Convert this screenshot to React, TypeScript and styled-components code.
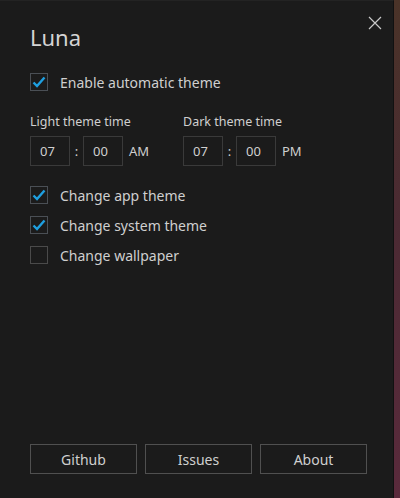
import React, { useState } from 'react';
import styled, { createGlobalStyle } from 'styled-components';

const GlobalStyle = createGlobalStyle`
  html, body {
    margin: 0;
    padding: 0;
    width: 400px;
    height: 498px;
    overflow: hidden;
    background: linear-gradient(180deg, #4a3328 0%, #4b2a33 45%, #5a2a3c 100%);
  }
  * { box-sizing: border-box; }
`;

const Window = styled.div`
  width: 394px;
  height: 498px;
  background: #1b1b1b;
  border-right: 1px solid #111;
  border-top: 1px solid #232323;
  display: flex;
  flex-direction: column;
  padding: 20px 20px 24px 30px;
  font-family: 'Noto Sans', 'Open Sans', sans-serif;
  color: #cfcfcf;
  position: relative;
`;

const CloseButton = styled.button`
  position: absolute;
  top: 12px;
  right: 8px;
  width: 20px;
  height: 20px;
  padding: 0;
  border: none;
  background: transparent;
  display: flex;
  align-items: center;
  justify-content: center;
  cursor: pointer;
`;

const Title = styled.h1`
  margin: 0;
  font-size: 22px;
  font-weight: 400;
  line-height: 32px;
  color: #d4d4d4;
`;

const CheckRow = styled.label`
  display: flex;
  align-items: center;
  gap: 12px;
  height: 30px;
  font-size: 14px;
  color: #cfcfcf;
  cursor: pointer;
`;

const Box = styled.span<{ $checked: boolean }>`
  width: 18px;
  height: 18px;
  border: 1px solid ${(p) => (p.$checked ? '#4a4f55' : '#4a4a4a')};
  background: #1b1b1b;
  display: flex;
  align-items: center;
  justify-content: center;
`;

const TimeSection = styled.div`
  display: flex;
  margin-top: 16px;
  margin-bottom: 14px;
`;

const TimeGroup = styled.div`
  width: 153px;
  display: flex;
  flex-direction: column;
  gap: 5px;
`;

const TimeLabel = styled.div`
  font-size: 12.5px;
  line-height: 18px;
  color: #cfcfcf;
`;

const TimeRow = styled.div`
  display: flex;
  align-items: center;
  font-size: 13px;
`;

const TimeField = styled.div`
  width: 40px;
  height: 30px;
  border: 1px solid #3a3a3a;
  display: flex;
  align-items: center;
  padding-left: 9px;
  font-size: 13px;
  color: #d0d0d0;
`;

const Colon = styled.span`
  width: 13px;
  text-align: center;
`;

const Meridiem = styled.span`
  margin-left: 6px;
`;

const CheckList = styled.div<{ $top?: number }>`
  display: flex;
  flex-direction: column;
  margin-top: ${(p) => p.$top ?? 0}px;
`;

const Spacer = styled.div`
  flex: 1;
`;

const Footer = styled.div`
  display: flex;
  gap: 8px;
`;

const FooterButton = styled.button`
  flex: 0 0 107px;
  height: 30px;
  background: #1b1b1b;
  border: 1px solid #505050;
  color: #cfcfcf;
  font-family: 'Noto Sans', 'Open Sans', sans-serif;
  font-size: 14px;
  padding: 0;
  cursor: pointer;
`;

const Check = () => (
  <svg width="14" height="12" viewBox="0 0 14 12">
    <path d="M1.5 6.5 L5 10 L12.5 1.5" fill="none" stroke="#1e9fe0" strokeWidth="2.4" />
  </svg>
);

const Checkbox = ({ label, initial }: { label: string; initial: boolean }) => {
  const [checked, setChecked] = useState(initial);
  return (
    <CheckRow onClick={() => setChecked(!checked)}>
      <Box $checked={checked}>{checked && <Check />}</Box>
      {label}
    </CheckRow>
  );
};

const Time = ({ label, h, m, mer }: { label: string; h: string; m: string; mer: string }) => (
  <TimeGroup>
    <TimeLabel>{label}</TimeLabel>
    <TimeRow>
      <TimeField>{h}</TimeField>
      <Colon>:</Colon>
      <TimeField>{m}</TimeField>
      <Meridiem>{mer}</Meridiem>
    </TimeRow>
  </TimeGroup>
);

export default function App() {
  return (
    <>
      <GlobalStyle />
      <Window>
        <CloseButton aria-label="Close">
          <svg width="14" height="14" viewBox="0 0 14 14">
            <path d="M1 1 L13 13 M13 1 L1 13" stroke="#c8c8c8" strokeWidth="1.2" />
          </svg>
        </CloseButton>
        <Title>Luna</Title>
        <CheckList $top={14}>
          <Checkbox label="Enable automatic theme" initial />
        </CheckList>
        <TimeSection>
          <Time label="Light theme time" h="07" m="00" mer="AM" />
          <Time label="Dark theme time" h="07" m="00" mer="PM" />
        </TimeSection>
        <CheckList>
          <Checkbox label="Change app theme" initial />
          <Checkbox label="Change system theme" initial />
          <Checkbox label="Change wallpaper" initial={false} />
        </CheckList>
        <Spacer />
        <Footer>
          <FooterButton>Github</FooterButton>
          <FooterButton>Issues</FooterButton>
          <FooterButton>About</FooterButton>
        </Footer>
      </Window>
    </>
  );
}
